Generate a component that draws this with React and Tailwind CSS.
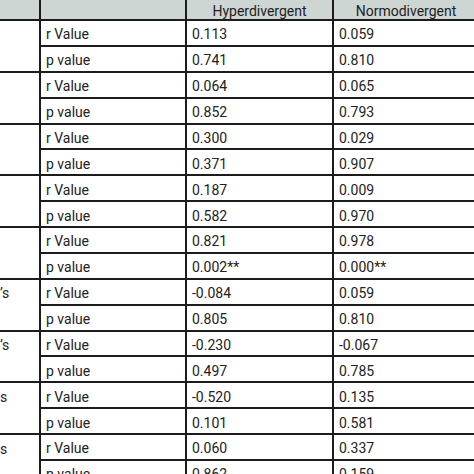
import React from 'react';

const groups = [
    { label: '', r: ['0.113', '0.059'], p: ['0.741', '0.810'] },
    { label: '', r: ['0.064', '0.065'], p: ['0.852', '0.793'] },
    { label: '', r: ['0.300', '0.029'], p: ['0.371', '0.907'] },
    { label: '', r: ['0.187', '0.009'], p: ['0.582', '0.970'] },
    { label: '', r: ['0.821', '0.978'], p: ['0.002**', '0.000**'] },
    { label: '\u2019s', r: ['-0.084', '0.059'], p: ['0.805', '0.810'] },
    { label: '\u2019s', r: ['-0.230', '-0.067'], p: ['0.497', '0.785'] },
    { label: 's', r: ['-0.520', '0.135'], p: ['0.101', '0.581'] },
    { label: 's', r: ['0.060', '0.337'], p: ['0.862', '0.159'] },
];

const cell = 'flex items-center pt-[4px] pl-[5px] border-b-2 border-r-2 border-[#1c1c1c] whitespace-nowrap overflow-hidden';

const App = () => {
    return (
        <div className="w-[474px] h-[474px] overflow-hidden bg-white text-[#222] text-[14px]" style={{ fontFamily: 'Roboto, "Liberation Sans", sans-serif' }}>
            <div className="grid w-[480px] grid-cols-[41px_146px_147px_146px] grid-rows-[21px_repeat(18,25.875px)]">
                <div className="bg-[#cdd6d3] border-b-2 border-r-2 border-[#1c1c1c]"></div>
                <div className="bg-[#cdd6d3] border-b-2 border-r-2 border-[#1c1c1c]"></div>
                <div className="bg-[#cdd6d3] border-b-2 border-r-2 border-[#1c1c1c] flex items-center justify-center pt-[3px]">Hyperdivergent</div>
                <div className="bg-[#cdd6d3] border-b-2 border-r-2 border-[#1c1c1c] flex items-center justify-center pt-[3px]">Normodivergent</div>
                {groups.map((g, i) => (
                    <React.Fragment key={i}>
                        <div className="row-span-2 border-b-2 border-r-2 border-[#1c1c1c] overflow-hidden">
                            <div className="h-[24px] flex items-center pt-[4px] whitespace-nowrap">{g.label}</div>
                        </div>
                        <div className={cell}>r Value</div>
                        <div className={cell}>{g.r[0]}</div>
                        <div className={cell}>{g.r[1]}</div>
                        <div className={cell}>p value</div>
                        <div className={cell}>{g.p[0]}</div>
                        <div className={cell}>{g.p[1]}</div>
                    </React.Fragment>
                ))}
            </div>
        </div>
    );
};

export default App;
